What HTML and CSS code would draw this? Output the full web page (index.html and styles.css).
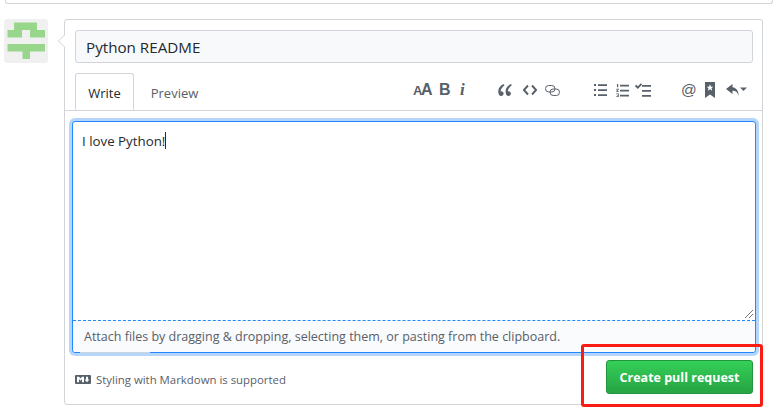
FILE: index.html
```html
<!DOCTYPE html>
<html lang="en">
<head>
<meta charset="utf-8">
<title>Open a pull request</title>
<link rel="stylesheet" href="styles.css">
</head>
<body>
<div class="top-box"></div>
<div class="discussion">
  <div class="avatar">
    <svg width="44" height="44" viewBox="0 0 44 44"><path fill="#98d68b" d="M10 3.500h23V11h8v7.500H26V11h-8v7.500H3.500V11H10z"/><path fill="#98d68b" d="M3.500 25h37.500v7.500H26V40h-7.500v-7.500h-15z"/></svg>
  </div>
  <div class="box">
    <span class="arrow"></span>
    <div class="title-field">Python README</div>
    <div class="tabbar">
      <div class="tab active">Write</div>
      <div class="tab">Preview</div>
      <div class="toolbar">
        <span class="tool aa"><span class="small-a">A</span>A</span>
        <span class="tool b">B</span>
        <span class="tool i">i</span>
        <svg class="quote" width="14" height="12" viewBox="0 0 14 12"><path fill="#586069" d="M6 0C3 1 .3 3.500 .3 7.500c0 2.500 1 4.500 2.900 4.500 1.400 0 2.400-1 2.400-2.400S4.600 7.300 3.200 7.300c-.3 0-.5 0-.7.100C2.700 5 4.300 2.800 6.300 1.400zM13.300 0c-3 1-5.700 3.500-5.700 7.500 0 2.500 1 4.500 2.900 4.500 1.400 0 2.400-1 2.400-2.400s-1-2.300-2.400-2.300c-.3 0-.5 0-.7.100.2-2.400 1.800-4.600 3.800-6z"/></svg>
        <svg class="code" width="14" height="12" viewBox="0 0 14 12"><path fill="none" stroke="#586069" stroke-width="1.900" d="M5 1.500.9 6 5 10.500M9 1.500 13.100 6 9 10.500"/></svg>
        <svg class="link" width="15" height="11" viewBox="0 0 15 11"><g fill="none" stroke="#586069" stroke-width="1"><rect x=".5" y=".5" width="9.500" height="6.500" rx="3.200"/><rect x="5" y="4" width="9.500" height="6.500" rx="3.200"/></g></svg>
        <svg class="ul" width="13" height="12" viewBox="0 0 13 12"><path fill="#586069" d="M0 0h2v2H0zM4 .2h9v1.700H4zM0 5h2v2H0zM4 5.200h9v1.700H4zM0 10h2v2H0zM4 10.200h9v1.700H4z"/></svg>
        <svg class="ol" width="13" height="13" viewBox="0 0 13 13"><path fill="#586069" d="M4 .7h9v1.700H4zM4 5.700h9v1.700H4zM4 10.700h9v1.700H4zM1 0h1.200v3.200H1zM.2 4.700h2.600v.8L1.500 7h1.300v.7H.2V7l1.400-1.600H.2zM.2 9.500h2.600V13H.2v-.7h1.800v-.7H1V11h1v-.8H.2z"/></svg>
        <svg class="task" width="16" height="14" viewBox="0 0 16 14"><path fill="#586069" d="M7 2h9v1.700H7zM7 7h9v1.700H7zM7 12h9v1.700H7z"/><path fill="none" stroke="#586069" stroke-width="1.800" d="M.6 2.500 2.800 4.700 6.500.8"/></svg>
        <span class="tool at">@</span>
        <svg class="mark" width="10" height="16" viewBox="0 0 10 16"><path fill="#586069" fill-rule="evenodd" d="M0 0h10v16L5 12.500 0 16zM5 2.200 4 4.700H1.700l1.800 1.500-.7 2.500L5 7.200l2.200 1.500-.7-2.500 1.800-1.500H6z"/></svg>
        <svg class="reply" width="21" height="12" viewBox="0 0 21 12"><path fill="#586069" d="M6.500 0 0 5l6.500 5V6.800c3 0 5 1.200 6 5.200.3-5-2-8.300-6-8.800z"/><path fill="#586069" d="M14 3.500h7l-3.500 3.500z"/></svg>
      </div>
    </div>
    <div class="editor">
      <div class="write-area">
        <span class="text">I love Python!</span><span class="cursor"></span>
        <svg class="grip" width="10" height="10" viewBox="0 0 10 10"><path stroke="#777" stroke-width="1" d="M1 9 9 1M5 9l4-4"/></svg>
      </div>
      <div class="attach">Attach files by dragging &amp; dropping, selecting them, or pasting from the clipboard.</div>
    </div>
    <div class="footer">
      <div class="md-note">
        <svg width="16" height="9" viewBox="0 0 16 10" preserveAspectRatio="none"><path fill="#586069" fill-rule="evenodd" d="M1 0h14a1 1 0 0 1 1 1v8a1 1 0 0 1-1 1H1a1 1 0 0 1-1-1V1a1 1 0 0 1 1-1zM2 8h2V4.500L5.500 6.500 7 4.500V8h2V2H7L5.500 4 4 2H2zM12 8l2.500-3H13V2h-2v3H9.500z"/></svg>
        <span>Styling with Markdown is supported</span>
      </div>
      <button class="create">Create pull request</button>
    </div>
  </div>
</div>
<div class="annotation"></div>
</body>
</html>
```
FILE: styles.css
```css
* { box-sizing: border-box; }
html, body { margin: 0; padding: 0; }
body {
  width: 773px;
  height: 418px;
  overflow: hidden;
  background: #fff;
  font-family: "Open Sans", "Noto Sans", sans-serif;
  color: #24292e;
  position: relative;
}
.top-box {
  height: 4px;
  margin-left: 5px;
  border: 1px solid #d1d5da;
  border-top: 0;
  border-radius: 0 0 3px 3px;
}
.discussion {
  display: flex;
  align-items: flex-start;
  margin: 15px 10px 0 4px;
  gap: 16px;
}
.avatar {
  width: 44px;
  height: 44px;
  flex: none;
  background: #f0f0f0;
  border-radius: 3px;
}
.avatar svg { display: block; }
.box {
  position: relative;
  width: 699px;
  height: 386px;
  flex: none;
  padding: 10px 9px 0 10px;
  border: 1px solid #d1d5da;
  border-radius: 3px;
}
.arrow {
  position: absolute;
  left: -7px;
  top: 15px;
  width: 12px;
  height: 12px;
  background: #fff;
  border-left: 1px solid #d1d5da;
  border-bottom: 1px solid #d1d5da;
  transform: rotate(45deg) scale(.72);
}
.title-field {
  height: 33px;
  padding: 0 10px;
  font-size: 15.200px;
  line-height: 32px;
  background: #f8f9fb;
  border: 1px solid #d1d5da;
  border-radius: 3px;
}
.tabbar {
  display: flex;
  align-items: flex-end;
  height: 37px;
  margin: 11px -9px 0 -10px;
  padding-left: 10px;
  border-bottom: 1px solid #d1d5da;
}
.tab {
  height: 37px;
  font-size: 13px;
  line-height: 40px;
  color: #586069;
  width: 81px;
  text-align: center;
}
.tab.active {
  width: 59px;
  color: #24292e;
  background: #fff;
  border: 1px solid #d1d5da;
  border-bottom-color: #fff;
  border-radius: 3px 3px 0 0;
  line-height: 38px;
}
.toolbar {
  display: flex;
  align-items: center;
  align-self: flex-start;
  height: 32px;
  margin-left: auto;
  margin-right: 15px;
  color: #586069;
}
.toolbar svg { display: block; flex: none; }
.tool { font-family: "Liberation Sans", sans-serif; font-weight: 700; line-height: 16px; flex: none; }
.aa { font-size: 16px; width: 17px; letter-spacing: -1.500px; white-space: nowrap; }
.small-a { font-size: 13px; }
.b { font-size: 16px; width: 11px; margin-left: 9px; }
.i { font-size: 17px; width: 5px; font-style: italic; margin-left: 10px; font-family: "Liberation Serif", serif; }
.quote { margin-left: 33px; }
.code { margin-left: 11px; }
.link { margin-left: 8px; }
.ul { margin-left: 34px; }
.ol { margin-left: 9px; }
.task { margin-left: 6px; }
.at { font-size: 15.500px; width: 14px; font-weight: 400; margin-left: 30px; }
.mark { margin-left: 10px; }
.reply { margin-left: 11px; }
.editor {
  position: relative;
  margin: 10px 0 0 -3px;
  width: 684px;
  height: 232px;
  background: #fff;
  border: 1px solid #2188ff;
  border-radius: 3px;
  box-shadow: 0 0 0 3px #b5d5fb;
  display: flex;
  flex-direction: column;
}
.editor::after {
  content: "";
  position: absolute;
  left: 7px;
  bottom: -1px;
  width: 70px;
  height: 1px;
  background: #c8d4e0;
}
.write-area {
  position: relative;
  flex: 1;
  padding: 9px 9px;
  font-size: 13.300px;
  line-height: 20px;
}
.cursor {
  display: inline-block;
  width: 1px;
  height: 17px;
  background: #24292e;
  vertical-align: -3px;
}
.grip { position: absolute; right: 1px; bottom: 1px; }
.attach {
  flex: none;
  height: 32px;
  padding: 0 10px 0 11px;
  font-size: 12.500px;
  line-height: 31px;
  color: #586069;
  background: #fafbfc;
  border-top: 1px dashed #2188ff;
  border-radius: 0 0 3px 3px;
}
.footer {
  display: flex;
  align-items: center;
  justify-content: space-between;
  padding-top: 7px;
}
.md-note {
  display: flex;
  align-items: center;
  gap: 5px;
  margin-top: 4px;
  font-size: 11.400px;
  color: #586069;
}
.md-note svg { display: block; }
.create {
  width: 147px;
  height: 34px;
  padding: 0;
  font: 700 12.500px "Open Sans", "Noto Sans", sans-serif;
  color: #fff;
  background: linear-gradient(#34d058, #28a745 90%);
  border: 1px solid #22943e;
  border-radius: 3px;
}
.annotation {
  position: absolute;
  left: 581px;
  top: 344px;
  width: 182px;
  height: 63px;
  border: 3px solid #fb1b12;
  border-radius: 3px;
}
```
